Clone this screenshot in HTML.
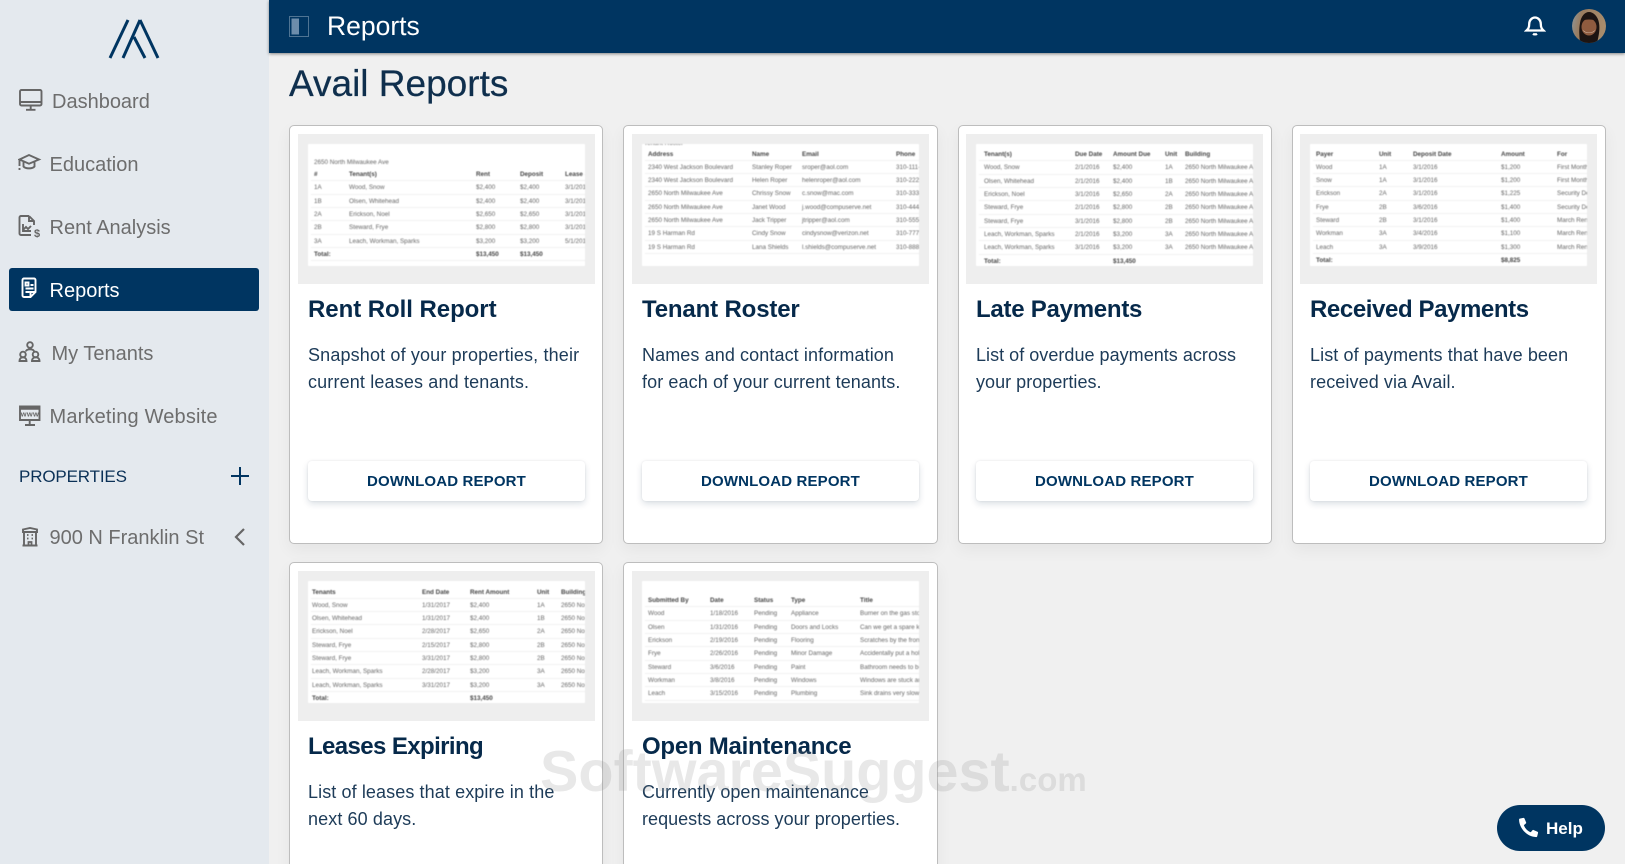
<!DOCTYPE html>
<html lang="en"><head><meta charset="utf-8"><title>Avail Reports</title>
<style>
*{box-sizing:border-box}
html,body{margin:0;padding:0;width:1625px;height:864px;overflow:hidden;background:#f0f0f0;font-family:"Liberation Sans",sans-serif}
#wrap{position:relative;width:1625px;height:864px;overflow:hidden;background:#f0f0f0}
.a{position:absolute;white-space:nowrap}
#side{position:absolute;left:0;top:0;width:269px;height:864px;background:#e4e9ee}
#top{position:absolute;left:269px;top:0;width:1356px;height:53px;background:#003561;box-shadow:0 1px 3px rgba(0,0,0,.45)}
.nav{position:absolute;white-space:nowrap;font-size:20px;line-height:30px;color:#6d6d6d}
.ic{position:absolute;fill:none;stroke:#666;stroke-width:1.9}
.card{position:absolute;width:314px;background:#fff;border:1px solid #bdbdbd;border-radius:5px;box-shadow:0 6px 16px rgba(0,0,0,.05)}
.img{position:absolute;left:8px;top:8px;width:297px;height:150px;background:#eee}
.wh{position:absolute;left:10px;top:10px;width:277px;height:122px;background:#fff;overflow:hidden;filter:blur(.4px)}
.tb{position:absolute;left:3px;right:0;margin-top:1px;font-size:6.3px;color:#666;white-space:nowrap}
.r{position:relative;height:13.33px;line-height:13.33px;border-bottom:1px solid #f1f1f1}
.r i{position:absolute;top:0;font-style:normal}
.h{font-weight:bold;color:#444}
.c1 i:nth-child(1){left:3px}.c1 i:nth-child(2){left:38px}.c1 i:nth-child(3){left:165px}.c1 i:nth-child(4){left:209px}.c1 i:nth-child(5){left:254px}
.c2 i:nth-child(1){left:3px}.c2 i:nth-child(2){left:107px}.c2 i:nth-child(3){left:157px}.c2 i:nth-child(4){left:251px}
.c3 i:nth-child(1){left:5px}.c3 i:nth-child(2){left:96px}.c3 i:nth-child(3){left:134px}.c3 i:nth-child(4){left:186px}.c3 i:nth-child(5){left:206px}
.c4 i:nth-child(1){left:3px}.c4 i:nth-child(2){left:66px}.c4 i:nth-child(3){left:100px}.c4 i:nth-child(4){left:188px}.c4 i:nth-child(5){left:244px}
.c5 i:nth-child(1){left:1px}.c5 i:nth-child(2){left:111px}.c5 i:nth-child(3){left:159px}.c5 i:nth-child(4){left:226px}.c5 i:nth-child(5){left:250px}
.c6 i:nth-child(1){left:3px}.c6 i:nth-child(2){left:65px}.c6 i:nth-child(3){left:109px}.c6 i:nth-child(4){left:146px}.c6 i:nth-child(5){left:215px}
.tt{position:absolute;left:18px;top:169px;font-size:24px;line-height:30px;font-weight:bold;color:#06294a;white-space:nowrap}
.ds{position:absolute;left:18px;top:216px;font-size:18px;line-height:27px;letter-spacing:.1px;color:#1d3b58;white-space:nowrap}
.bt{position:absolute;left:18px;top:335px;width:277px;height:40px;background:#fff;border-radius:4px;box-shadow:0 3px 7px rgba(0,40,80,.14),0 0 2px rgba(0,0,0,.08);text-align:center;font-weight:bold;font-size:15px;letter-spacing:.15px;line-height:41px;color:#003561}
</style></head><body>
<div id="wrap">

<div id="side">
<svg class="a" style="left:0;top:0" width="269" height="70" fill="none" stroke="#003561" stroke-width="3"><path d="M128 20 110 58M140 20 123 58M140 20 158 58M134 37 145 58"/></svg>

<svg class="ic" style="left:18px;top:88px" width="26" height="24" viewBox="0 0 26 24"><rect x="2" y="2" width="21.500" height="15.500" rx="1.500"/><path d="M2 14h21.500M12.700 18v3.500M8 21.800h9.500"/></svg>
<div class="nav" style="left:52px;top:87px">Dashboard</div>

<svg class="ic" style="left:18px;top:152px" width="24" height="22" viewBox="0 0 24 22"><path d="M1.500 7.500 11 3l10 4.500-10 4.200zM5.500 9.500v5c2 2.500 9 2.500 11 0v-5M1.500 8v6M1.500 16v2"/></svg>
<div class="nav" style="left:49.500px;top:150px">Education</div>

<svg class="ic" style="left:18px;top:214px" width="24" height="24" viewBox="0 0 24 24"><path d="M11 2H3a1.500 1.500 0 0 0-1.500 1.500v16A1.500 1.500 0 0 0 3 21h10M11 2l5 5v4M11 2v5h5M5 10v7h8M5 16l3-3 2 2 3-3"/><text x="16" y="23" font-size="11" font-weight="bold" fill="#666" stroke="none" font-family="Liberation Sans">$</text></svg>
<div class="nav" style="left:49.500px;top:213px">Rent Analysis</div>

<div class="a" style="left:9px;top:268px;width:250px;height:43px;background:#003561;border-radius:3px"></div>
<svg class="ic" style="left:21px;top:277px;stroke:#fff" width="17" height="22" viewBox="0 0 17 22"><path d="M3 1.500h10a1.500 1.500 0 0 1 1.500 1.500v12l-5 5H3A1.500 1.500 0 0 1 1.500 18.500V3A1.500 1.500 0 0 1 3 1.500zM4.500 5.500h3v3h-3zM9.500 8h3M4.500 11.500h8M4.500 15h4M14.500 15h-5v5"/></svg>
<div class="nav" style="left:49.500px;top:276px;color:#fff">Reports</div>

<svg class="ic" style="left:18px;top:340px" width="24" height="23" viewBox="0 0 24 23"><circle cx="12" cy="5" r="2.800"/><circle cx="5" cy="14.500" r="2.800"/><circle cx="17.500" cy="14.500" r="2.800"/><path d="M8 11.500c0-3 8-3 8 0M1.500 21c0-5 7-5 7 0zM14 21c0-5 7.500-5 7.500 0z"/></svg>
<div class="nav" style="left:51.500px;top:339px">My Tenants</div>

<svg class="ic" style="left:18px;top:405px" width="24" height="22" viewBox="0 0 24 22"><path d="M2 1.500h19.500v13.500H2zM11.700 15v4M7 20h10" /><path d="M2 3.500h19.500" stroke-width="2.500"/><text x="2.800" y="11.500" font-size="7.500" font-weight="bold" fill="#666" stroke="none" font-family="Liberation Sans" textLength="18">www</text></svg>
<div class="nav" style="left:49.500px;top:402px;letter-spacing:.17px">Marketing Website</div>

<div class="a" style="left:19px;top:464px;font-size:17px;letter-spacing:-.15px;line-height:26px;color:#0b3157">PROPERTIES</div>
<svg class="a" style="left:230px;top:466px" width="20" height="20" stroke="#003561" stroke-width="2"><path d="M10 1v18M1 10h18"/></svg>

<svg class="ic" style="left:21px;top:527px" width="18" height="20" viewBox="0 0 18 20"><path d="M2 2.500 9 1l7 1.500V5H2zM3 5v13.500h12V5M1.500 18.500h15"/><path d="M6 8h1.500M10.500 8H12M6 11.500h1.500M10.500 11.500H12M7.500 18.500v-3.500h3v3.500" stroke-width="1.800"/></svg>
<div class="nav" style="left:49.500px;top:523px">900 N Franklin St</div>
<svg class="a" style="left:233px;top:527px" width="14" height="20" fill="none" stroke="#666" stroke-width="2.200"><path d="M11 2 3 10l8 8"/></svg>
</div>

<div id="top">
<svg class="a" style="left:20px;top:16px" width="20" height="21"><rect x=".5" y=".5" width="19" height="20" fill="none" stroke="#4f7493"/><rect x="2.500" y="2.500" width="7.500" height="16" fill="#6d8dab"/></svg>
<div class="a" style="left:58px;top:8px;font-size:26.500px;line-height:36px;color:#fff">Reports</div>
<svg class="a" style="left:1255px;top:15px" width="22" height="22" fill="none" stroke="#fff" stroke-width="2.300"><path d="M2.500 15.500h17c-1.500-1.500-2.700-2.500-2.700-6.500 0-3.500-2.500-6.500-5.800-6.500S5.200 5.500 5.200 9c0 4-1.200 5-2.700 6.500zM9 18.800c1 .8 3 .8 4 0"/></svg>
<svg class="a" style="left:1303px;top:9px" width="34" height="34" viewBox="0 0 34 34"><defs><clipPath id="cp"><circle cx="17" cy="17" r="17"/></clipPath><linearGradient id="lg" x1="0" x2="1" y1="0" y2=".2"><stop offset="0" stop-color="#8d979d"/><stop offset=".3" stop-color="#9a7d60"/><stop offset="1" stop-color="#a88c6c"/></linearGradient></defs><g clip-path="url(#cp)"><rect width="34" height="34" fill="url(#lg)"/><path d="M8 34c-1-10-1-14 0-20 1-7 5-11 9-11s9 4 10 11c1 6 0 12-2 20z" fill="#1d1412"/><ellipse cx="17" cy="18" rx="7.500" ry="8.500" fill="#8f5b3f"/><path d="M11 21c3 3.500 9 3.500 12 0-1 4-11 4-12 0z" fill="#d9c0ae"/><path d="M9 12c2-5 14-5 16 0-4-2-12-2-16 0z" fill="#1d1412"/></g></svg>
</div>

<div class="a" style="left:289px;top:62px;font-size:37px;line-height:44px;color:#0f2f4d;-webkit-text-stroke:.25px #0f2f4d">Avail Reports</div>

<!-- Card 1 -->
<div class="card" style="left:289px;top:125px;height:419px">
<div class="img"><div class="wh"><div class="tb c1" style="top:12px">
<div style="height:11px;line-height:11px;padding-left:3px">2650 North Milwaukee Ave</div>
<div class="r h"><i>#</i><i>Tenant(s)</i><i>Rent</i><i>Deposit</i><i>Lease S</i></div>
<div class="r"><i>1A</i><i>Wood, Snow</i><i>$2,400</i><i>$2,400</i><i>3/1/2016</i></div>
<div class="r"><i>1B</i><i>Olsen, Whitehead</i><i>$2,400</i><i>$2,400</i><i>3/1/2016</i></div>
<div class="r"><i>2A</i><i>Erickson, Noel</i><i>$2,650</i><i>$2,650</i><i>3/1/2016</i></div>
<div class="r"><i>2B</i><i>Steward, Frye</i><i>$2,800</i><i>$2,800</i><i>3/1/2016</i></div>
<div class="r"><i>3A</i><i>Leach, Workman, Sparks</i><i>$3,200</i><i>$3,200</i><i>5/1/2016</i></div>
<div class="r h"><i>Total:</i><i></i><i>$13,450</i><i>$13,450</i></div>
</div></div></div>
<div class="tt" style="letter-spacing:-.05px">Rent Roll Report</div>
<div class="ds" style="letter-spacing:.15px">Snapshot of your properties, their<br>current leases and tenants.</div>
<div class="bt">DOWNLOAD REPORT</div>
</div>

<!-- Card 2 -->
<div class="card" style="left:623px;top:125px;height:419px;width:315px">
<div class="img"><div class="wh"><div class="a" style="left:2px;top:-4px;font-size:6.3px;color:#666">Tenant Roster</div><div class="tb c2" style="top:2.500px">
<div class="r h"><i>Address</i><i>Name</i><i>Email</i><i>Phone</i></div>
<div class="r"><i>2340 West Jackson Boulevard</i><i>Stanley Roper</i><i>sroper@aol.com</i><i>310-111-</i></div>
<div class="r"><i>2340 West Jackson Boulevard</i><i>Helen Roper</i><i>helenroper@aol.com</i><i>310-222-</i></div>
<div class="r"><i>2650 North Milwaukee Ave</i><i>Chrissy Snow</i><i>c.snow@mac.com</i><i>310-333-</i></div>
<div class="r"><i>2650 North Milwaukee Ave</i><i>Janet Wood</i><i>j.wood@compuserve.net</i><i>310-444-</i></div>
<div class="r"><i>2650 North Milwaukee Ave</i><i>Jack Tripper</i><i>jtripper@aol.com</i><i>310-555-</i></div>
<div class="r"><i>19 S Harman Rd</i><i>Cindy Snow</i><i>cindysnow@verizon.net</i><i>310-777-</i></div>
<div class="r"><i>19 S Harman Rd</i><i>Lana Shields</i><i>l.shields@compuserve.net</i><i>310-888-</i></div>
</div></div></div>
<div class="tt" style="letter-spacing:-.15px">Tenant Roster</div>
<div class="ds">Names and contact information<br>for each of your current tenants.</div>
<div class="bt">DOWNLOAD REPORT</div>
</div>

<!-- Card 3 -->
<div class="card" style="left:958px;top:125px;height:419px">
<div class="img" style="left:7px"><div class="wh"><div class="tb c3" style="top:3px">
<div class="r h"><i>Tenant(s)</i><i>Due Date</i><i>Amount Due</i><i>Unit</i><i>Building</i></div>
<div class="r"><i>Wood, Snow</i><i>2/1/2016</i><i>$2,400</i><i>1A</i><i>2650 North Milwaukee Av</i></div>
<div class="r"><i>Olsen, Whitehead</i><i>2/1/2016</i><i>$2,400</i><i>1B</i><i>2650 North Milwaukee Av</i></div>
<div class="r"><i>Erickson, Noel</i><i>3/1/2016</i><i>$2,650</i><i>2A</i><i>2650 North Milwaukee Av</i></div>
<div class="r"><i>Steward, Frye</i><i>2/1/2016</i><i>$2,800</i><i>2B</i><i>2650 North Milwaukee Av</i></div>
<div class="r"><i>Steward, Frye</i><i>3/1/2016</i><i>$2,800</i><i>2B</i><i>2650 North Milwaukee Av</i></div>
<div class="r"><i>Leach, Workman, Sparks</i><i>2/1/2016</i><i>$3,200</i><i>3A</i><i>2650 North Milwaukee Av</i></div>
<div class="r"><i>Leach, Workman, Sparks</i><i>3/1/2016</i><i>$3,200</i><i>3A</i><i>2650 North Milwaukee Av</i></div>
<div class="r h"><i>Total:</i><i></i><i>$13,450</i></div>
</div></div></div>
<div class="tt" style="left:17px;letter-spacing:-.25px">Late Payments</div>
<div class="ds" style="left:17px;letter-spacing:.03px">List of overdue payments across<br>your properties.</div>
<div class="bt" style="left:17px">DOWNLOAD REPORT</div>
</div>

<!-- Card 4 -->
<div class="card" style="left:1292px;top:125px;height:419px">
<div class="img" style="left:7px"><div class="wh"><div class="tb c4" style="top:2.500px">
<div class="r h"><i>Payer</i><i>Unit</i><i>Deposit Date</i><i>Amount</i><i>For</i></div>
<div class="r"><i>Wood</i><i>1A</i><i>3/1/2016</i><i>$1,200</i><i>First Month</i></div>
<div class="r"><i>Snow</i><i>1A</i><i>3/1/2016</i><i>$1,200</i><i>First Month</i></div>
<div class="r"><i>Erickson</i><i>2A</i><i>3/1/2016</i><i>$1,225</i><i>Security De</i></div>
<div class="r"><i>Frye</i><i>2B</i><i>3/6/2016</i><i>$1,400</i><i>Security De</i></div>
<div class="r"><i>Steward</i><i>2B</i><i>3/1/2016</i><i>$1,400</i><i>March Rent</i></div>
<div class="r"><i>Workman</i><i>3A</i><i>3/4/2016</i><i>$1,100</i><i>March Rent</i></div>
<div class="r"><i>Leach</i><i>3A</i><i>3/9/2016</i><i>$1,300</i><i>March Rent</i></div>
<div class="r h"><i>Total:</i><i></i><i></i><i>$8,825</i></div>
</div></div></div>
<div class="tt" style="left:17px;letter-spacing:-.4px">Received Payments</div>
<div class="ds" style="left:17px">List of payments that have been<br>received via Avail.</div>
<div class="bt" style="left:17px">DOWNLOAD REPORT</div>
</div>

<!-- Card 5 -->
<div class="card" style="left:289px;top:562px;height:320px">
<div class="img"><div class="wh"><div class="tb c5" style="top:3.500px">
<div class="r h"><i>Tenants</i><i>End Date</i><i>Rent Amount</i><i>Unit</i><i>Building</i></div>
<div class="r"><i>Wood, Snow</i><i>1/31/2017</i><i>$2,400</i><i>1A</i><i>2650 Nor</i></div>
<div class="r"><i>Olsen, Whitehead</i><i>1/31/2017</i><i>$2,400</i><i>1B</i><i>2650 Nor</i></div>
<div class="r"><i>Erickson, Noel</i><i>2/28/2017</i><i>$2,650</i><i>2A</i><i>2650 Nor</i></div>
<div class="r"><i>Steward, Frye</i><i>2/15/2017</i><i>$2,800</i><i>2B</i><i>2650 Nor</i></div>
<div class="r"><i>Steward, Frye</i><i>3/31/2017</i><i>$2,800</i><i>2B</i><i>2650 Nor</i></div>
<div class="r"><i>Leach, Workman, Sparks</i><i>2/28/2017</i><i>$3,200</i><i>3A</i><i>2650 Nor</i></div>
<div class="r"><i>Leach, Workman, Sparks</i><i>3/31/2017</i><i>$3,200</i><i>3A</i><i>2650 Nor</i></div>
<div class="r h"><i>Total:</i><i></i><i>$13,450</i></div>
</div></div></div>
<div class="tt" style="letter-spacing:-.6px">Leases Expiring</div>
<div class="ds">List of leases that expire in the<br>next 60 days.</div>
</div>

<!-- Card 6 -->
<div class="card" style="left:623px;top:562px;height:320px;width:315px">
<div class="img"><div class="wh"><div class="tb c6" style="top:12px">
<div class="r h"><i>Submitted By</i><i>Date</i><i>Status</i><i>Type</i><i>Title</i></div>
<div class="r"><i>Wood</i><i>1/18/2016</i><i>Pending</i><i>Appliance</i><i>Burner on the gas sto</i></div>
<div class="r"><i>Olsen</i><i>1/31/2016</i><i>Pending</i><i>Doors and Locks</i><i>Can we get a spare ke</i></div>
<div class="r"><i>Erickson</i><i>2/19/2016</i><i>Pending</i><i>Flooring</i><i>Scratches by the fron</i></div>
<div class="r"><i>Frye</i><i>2/26/2016</i><i>Pending</i><i>Minor Damage</i><i>Accidentally put a hol</i></div>
<div class="r"><i>Steward</i><i>3/6/2016</i><i>Pending</i><i>Paint</i><i>Bathroom needs to be</i></div>
<div class="r"><i>Workman</i><i>3/8/2016</i><i>Pending</i><i>Windows</i><i>Windows are stuck an</i></div>
<div class="r"><i>Leach</i><i>3/15/2016</i><i>Pending</i><i>Plumbing</i><i>Sink drains very slowl</i></div>
</div></div></div>
<div class="tt" style="letter-spacing:-.25px">Open Maintenance</div>
<div class="ds" style="letter-spacing:.03px">Currently open maintenance<br>requests across your properties.</div>
</div>

<!-- Watermark -->
<div class="a" style="left:540px;top:742px;font-size:57.500px;line-height:60px;font-weight:bold;color:rgba(140,140,140,.2)">SoftwareSuggest<span style="font-size:33px">.com</span></div>

<!-- Help -->
<div class="a" style="left:1497px;top:805px;width:108px;height:46px;border-radius:23px;background:#003561"></div>
<svg class="a" style="left:1517px;top:817px" width="24" height="24" viewBox="0 0 22 22"><path fill="#fff" d="M2.500 1.500 5.800.8c.4-.1.800.1 1 .5l1.600 3.700c.1.300 0 .7-.2.900L6.300 7.500c1.100 3 3.300 5.300 6.300 6.500l1.600-1.900c.2-.3.600-.4.900-.2l3.700 1.600c.4.200.6.600.5 1l-.8 3.300c-.1.400-.4.600-.8.600C9.500 18.400 1.900 10.500 1.900 2.300c0-.4.200-.7.600-.8z"/></svg>
<div class="a" style="left:1546px;top:816px;font-size:17px;font-weight:bold;line-height:26px;color:#fff">Help</div>

</div>
</body></html>
